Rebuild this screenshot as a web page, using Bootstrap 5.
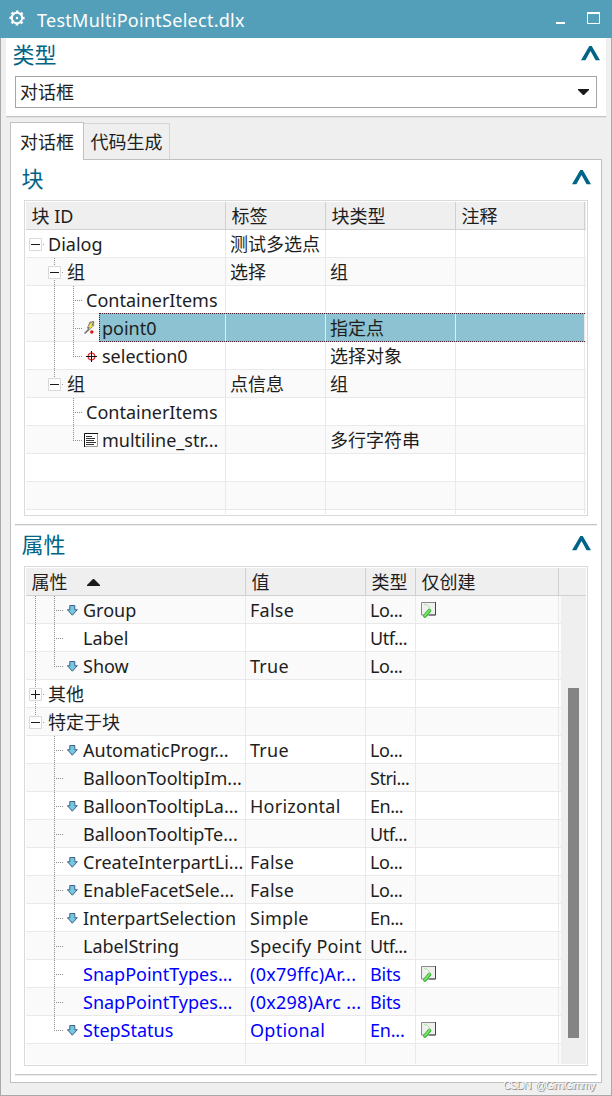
<!DOCTYPE html>
<html lang="zh-CN">
<head>
<meta charset="utf-8">
<meta name="viewport" content="width=device-width, initial-scale=1">
<title>TestMultiPointSelect.dlx</title>
<link rel="stylesheet" href="https://cdn.jsdelivr.net/npm/bootstrap@5.3.0/dist/css/bootstrap.min.css">
<style>
  body { font-family: "Noto Sans", "Noto Sans CJK SC", sans-serif; font-size: 18px; line-height: 28px; color: #1e1e1e; background: #efefef; }
  .win { height: 1096px; overflow: hidden; }
  .frame { border: 1px solid #a9a9a9; border-top: 0; padding: 0 5px; }
  .titlebar { height: 38px; background: #539eb8; color: #fff; }
  .caption-text { font-size: 18px; letter-spacing: .27px; margin: 2px 0 0 12px; }
  .type-pane { height: 79px; border-bottom: 1px solid #c4c4c4; box-shadow: 0 1px 0 #e3e3e3; }
  .type-head { height: 32px; padding: 1px 6px 0 7px; }
  .sec-title { color: #006487; font-size: 22px; line-height: 30px; font-weight: 400; margin-left: -.5px; }
  .combo { height: 32px; border: 1px solid #a6a6a6; margin: 6px 9px 0; padding: 0 7px 0 4px; }
  .tabs { height: 42px; margin: 0 4px; }
  .tab-a { height: 38px; width: 74px; border: 1px solid #c0c0c0; border-bottom: 0; background: #fff; position: relative; z-index: 2; margin-bottom: -1px; line-height: 38px; }
  .tab-b { height: 36px; width: 86px; border: 1px solid #d6d6d6; border-left: 0; border-bottom: 0; line-height: 37px; }
  .pane { height: 924px; margin: 0 4px; border: 1px solid #c0c0c0; padding: 0 4px; }
  .sec-head { height: 40px; padding: 3px 6px 0 7px; }
  .chev { margin-top: 7px; }
  .rule { height: 2px; background: #c6c6c6; border-bottom: 1px solid #ececec; margin-top: 8px; }
  .gridbox { border: 1px solid #dadada; padding: 1px; margin: 0 9px; background: #fff; }
  .gridbox.one { height: 316px; }
  .gridbox.two { height: 500px; }
  .grow { display: grid; height: 28px; border-bottom: 1px solid #e9e9e9; position: relative; flex: none; }
  .one .grow { grid-template-columns: 200px 100px 130px 129px 1fr; }
  .two .grow { grid-template-columns: 220px 120px 50px 143px 1fr; }
  .grow.hd { background: #efefef; border-color: #d0d0d0; }
  .grow.alt { background: #fafafa; }
  .gc { border-right: 1px solid #e9e9e9; padding-left: 4px; position: relative; z-index: 1; min-width: 0; height: 27px; line-height: 28px; white-space: nowrap; display: flex; align-items: center; }
  .gc:first-of-type { padding-left: 0; }
  .gc:last-child { border-right: 0; padding: 0; }
  .hd .gc, .hd .gc:first-of-type { padding-left: 5.5px; border-color: #d0d0d0; }
  .hd .gc:last-child { padding: 0; }
  #props .gc:nth-of-type(2) { letter-spacing: .25px; }
  #props .gc:nth-of-type(3) { letter-spacing: -.5px; }
  #props .blue .gc:nth-of-type(3) { letter-spacing: -.2px; }
  .gc .ic { position: relative; top: 1px; }
  .blue { color: #00f; }
  .g { flex: none; width: 19px; height: 28px; align-self: flex-start; }
  .dots { stroke: #8e8e8e; stroke-dasharray: 1 1; }
  .ic { flex: none; display: block; }
  .sel { position: absolute; left: 73px; right: 1px; top: -1px; bottom: -1px; background: #8cc2d1; border: 1px dotted #4a2030; }
  .scroller { width: 25px; background: #efefef; padding: 92px 8px 0 7px; }
  .thumb { height: 350px; width: 11px; background: #848484; }
  .watermark { position: absolute; left: 503px; top: 1077px; font: 11px/16px "Liberation Sans", sans-serif; color: #f4f4f4; text-shadow: 1px 1px 0 #8c8c8c; white-space: pre; letter-spacing: -.9px; }
</style>
<script src="https://cdn.jsdelivr.net/npm/bootstrap@5.3.0/dist/js/bootstrap.bundle.min.js"></script>
</head>
<body>
<div class="win d-flex flex-column position-relative">
  <header class="titlebar d-flex align-items-center flex-shrink-0">
    <svg width="16" height="16" viewBox="0 0 16 16" style="margin:-3px 0 0 9px" fill="none" stroke="#fff"><circle cx="8" cy="8" r="5.2" stroke-width="2"/><circle cx="8" cy="8" r="6.6" stroke-width="2" stroke-dasharray="2.6 2.58" stroke-dashoffset="1.3"/><circle cx="8" cy="8" r="1.2" fill="#fff" stroke="none"/></svg>
    <span class="caption-text">TestMultiPointSelect.dlx</span>
    <svg class="ms-auto" width="48" height="14" viewBox="0 0 48 14" style="margin-right:11px"><path d="M3 11h9" stroke="#fff" stroke-width="2"/><path d="M34.500 1v10.500h12V1" fill="none" stroke="#fff"/><path d="M34 1h13" stroke="#fff" stroke-width="2"/></svg>
  </header>
  <main class="frame flex-grow-1">
    <section class="type-pane bg-white">
      <div class="type-head d-flex justify-content-between">
        <h2 class="sec-title mb-0">类型</h2>
        <svg class="ic chev" width="19" height="15" viewBox="0 0 19 15"><path d="M0 14.300L8.300 0h2.400L19 14.300h-4.400L9.500 5 4.400 14.300z" fill="#006487"/></svg>
      </div>
      <div class="combo bg-white d-flex align-items-center justify-content-between">
        <span>对话框</span>
        <svg class="ic" width="11" height="6" viewBox="0 0 11 6"><path d="M0 0h11v1L6 6H5L0 1z" fill="#1a1a1a"/></svg>
      </div>
    </section>
    <nav class="tabs d-flex align-items-end">
      <div class="tab-a text-center">对话框</div>
      <div class="tab-b text-center">代码生成</div>
    </nav>
    <section class="pane bg-white">
      <div class="sec-head d-flex justify-content-between">
        <h2 class="sec-title mb-0">块</h2>
        <svg class="ic chev" width="19" height="15" viewBox="0 0 19 15"><path d="M0 14.300L8.300 0h2.400L19 14.300h-4.400L9.500 5 4.400 14.300z" fill="#006487"/></svg>
      </div>
      <div class="gridbox one"><div class="h-100 overflow-hidden" id="blocks"></div></div>
      <div class="rule"></div>
      <div class="sec-head d-flex justify-content-between">
        <h2 class="sec-title mb-0">属性</h2>
        <svg class="ic chev" width="19" height="15" viewBox="0 0 19 15"><path d="M0 14.300L8.300 0h2.400L19 14.300h-4.400L9.500 5 4.400 14.300z" fill="#006487"/></svg>
      </div>
      <div class="gridbox two d-flex flex-column">
        <div class="grow hd"><div class="gc">属性<svg class="ic" width="13" height="7" viewBox="0 0 13 7" style="margin-left:19px"><path d="M0 7V6L6 0h1l6 6v1z" fill="#1a1a1a"/></svg></div><div class="gc">值</div><div class="gc">类型</div><div class="gc">仅创建</div><div class="gc"></div></div>
        <div class="d-flex flex-grow-1 overflow-hidden">
          <div class="flex-grow-1" id="props"></div>
          <div class="scroller flex-shrink-0"><div class="thumb"></div></div>
        </div>
      </div>
      <div class="rule"></div>
    </section>
  </main>
  <div class="watermark">CSDN  @GimiGimmy</div>
</div>
<script>
  // Tree guide cells: each is 19px wide with its trunk at x = 9.5
  const line = d => `<path class="dots" d="${d}"/>`;
  const box = plus => `<path d="M3.500 8.500h12v12h-12z" fill="#fff" stroke="#d9d9d9"/><path d="M5 14.500h9${plus ? 'M9.500 10v9' : ''}" stroke="#1a1a1a" fill="none"/><path d="M17 14.500h1" stroke="#9c9c9c"/>`;
  const guides = {
    ' ': '',
    '|': line('M9.500 0v28'),
    't': line('M9.500 0v28') + line('M11 14.500h8'),
    'l': line('M9.500 0v15') + line('M11 14.500h8'),
    '-': box(false),
    'm': line('M9.500 0v28') + box(false),
    'n': line('M9.500 0v8') + box(false),
    'p': line('M9.500 0v28') + box(true)
  };
  const tree = s => [...s].map(c => `<svg class="g" viewBox="0 0 19 28">${guides[c]}</svg>`).join('');
  const icons = {
    point: '<svg class="ic" width="15" height="15" viewBox="0 0 15 15"><path d="M6.500 1l4-1 1 1-1 2 1 1-6 6-3.500 3-1-1 4-4-1-1z" fill="#777"/><path d="M7.500 2l2.500-.8-1.500 3.300h2L5.500 9l1.200-3H5z" fill="#f3e34b"/><circle cx="8.800" cy="11" r="1.700" fill="#e01010"/></svg>',
    target: '<svg class="ic" width="15" height="15" viewBox="0 0 15 15"><circle cx="8.500" cy="7.500" r="3.300" fill="none" stroke="#d33" stroke-width="1.300"/><path d="M3 7.500h11M8.500 2v11" stroke="#111"/></svg>',
    lines: '<svg class="ic" width="15" height="15" viewBox="0 0 15 15"><path d="M1.500.5h13v13h-13z" fill="#fff" stroke="#999"/><path d="M1.500 14V.5H15" fill="none" stroke="#111"/><path d="M3 3.500h6M3 5.500h9M3 7.500h8M3 9.500h10M3 11.500h8" stroke="#333"/></svg>',
    arrow: '<svg class="ic" width="11" height="11" viewBox="0 0 11 11"><path d="M2.800.5h5v4.200h2.500L5.300 10.200.400 4.700h2.400z" fill="#74c7dc" stroke="#3c5f8c"/></svg>',
    check: '<svg class="ic" width="17" height="17" viewBox="0 0 17 17"><path d="M1.500.5h14v12.500h-14z" fill="#efefef" stroke="#8a8a8a"/><path d="M15.500 0v13H9" fill="none" stroke="#444"/><path d="M4 2q4 1 6 4" stroke="#a8e8a0" fill="none"/><path d="M4.800 14l4.700-5.500" stroke="#39b035" stroke-width="3.600" stroke-linecap="round"/><path d="M4.800 13.700l4.700-5.500" stroke="#7dec6a" stroke-width="1.700" stroke-linecap="round"/></svg>'
  };
  const cell = h => `<div class="gc">${h}</div>`;

  // [guides, icon, name, label, block type]
  const blocks = [
    ['-', '', 'Dialog', '测试多选点', ''],
    [' m', '', '组', '选择', '组'],
    [' |t', '', 'ContainerItems', '', ''],
    [' |t', 'point', 'point0', '', '指定点'],
    [' |l', 'target', 'selection0', '', '选择对象'],
    [' n', '', '组', '点信息', '组'],
    ['  t', '', 'ContainerItems', '', ''],
    ['  l', 'lines', 'multiline_str...', '', '多行字符串'],
    ['', '', '', '', ''], ['', '', '', '', ''], ['', '', '', '', '']
  ];
  document.getElementById('blocks').innerHTML =
    '<div class="grow hd">' + ['块 ID', '标签', '块类型', '注释', ''].map(cell).join('') + '</div>' +
    blocks.map(([g, ic, n, a, b], i) => `<div class="grow${i % 2 ? ' alt' : ''}">` +
      (n === 'point0' ? '<span class="sel"></span>' : '') +
      `<div class="gc">${tree(g)}${ic ? icons[ic] : ''}<span style="margin-left:${ic ? 4 : 3}px">${n}</span></div>` +
      [a, b, '', ''].map(cell).join('') + '</div>').join('');

  // [guides, has arrow, name, value, type, create-only mark, edited]
  const props = [
    ['|t', 1, 'Group', 'False', 'Lo...', 1],
    ['|t', 0, 'Label', '', 'Utf...'],
    ['|l', 1, 'Show', 'True', 'Lo...'],
    ['p', 0, '其他', '', ''],
    ['n', 0, '特定于块', '', ''],
    [' t', 1, 'AutomaticProgr...', 'True', 'Lo...'],
    [' t', 0, 'BalloonTooltipIm...', '', 'Stri...'],
    [' t', 1, 'BalloonTooltipLa...', 'Horizontal', 'En...'],
    [' t', 0, 'BalloonTooltipTe...', '', 'Utf...'],
    [' t', 1, 'CreateInterpartLi...', 'False', 'Lo...'],
    [' t', 1, 'EnableFacetSele...', 'False', 'Lo...'],
    [' t', 1, 'InterpartSelection', 'Simple', 'En...'],
    [' t', 0, 'LabelString', 'Specify Point', 'Utf...'],
    [' t', 0, 'SnapPointTypes...', '(0x79ffc)Ar...', 'Bits', 1, 1],
    [' t', 0, 'SnapPointTypes...', '(0x298)Arc ...', 'Bits', 0, 1],
    [' l', 1, 'StepStatus', 'Optional', 'En...', 1, 1],
    ['', 0, '', '', '']
  ];
  document.getElementById('props').innerHTML = props.map(([g, ar, n, v, t, c, e], i) =>
    `<div class="grow${i % 2 ? '' : ' alt'}${e ? ' blue' : ''}"><div class="gc">${tree(g)}` +
    (ar ? `<span style="margin-left:3px">${icons.arrow}</span>` : '') +
    `<span style="margin-left:${g.length < 2 ? 3 : ar ? 5 : 19}px">${n}</span></div>` +
    [v, t, c ? icons.check : '', ''].map(cell).join('') + '</div>').join('');
</script>
</body>
</html>
